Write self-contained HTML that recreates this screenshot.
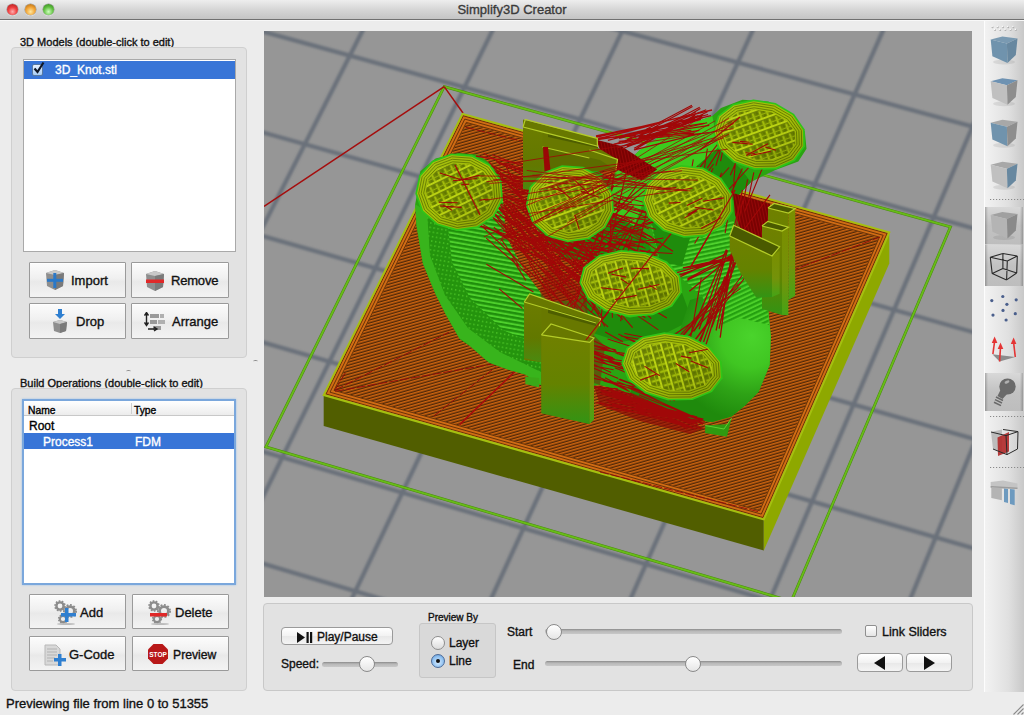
<!DOCTYPE html><html><head><meta charset="utf-8"><style>
*{margin:0;padding:0;box-sizing:border-box}
html,body{width:1024px;height:715px;overflow:hidden;background:#ececec;font-family:"Liberation Sans",sans-serif;color:#000;position:relative}
.glabel,.seltext,.row,.bt,#status,.lbl,.hdr span,#title{-webkit-text-stroke:0.35px currentColor}
#titlebar{position:absolute;left:0;top:0;width:1024px;height:20px;background:linear-gradient(#eeeeee,#d6d6d6 50%,#c4c4c4);border-bottom:1px solid #707070}
#titlebar:after{content:"";position:absolute;left:0;top:20px;width:1024px;height:1px;background:#f8f8f8}
.tl{position:absolute;top:4px;width:11px;height:11px;border-radius:50%;box-shadow:0 0 0 0.5px rgba(0,0,0,0.35), 0 1px 1px rgba(255,255,255,0.6)}
#title{position:absolute;left:0;width:1024px;top:2px;text-align:center;font-size:13px;color:#3a3a3a;padding-left:0px}
.glabel{position:absolute;font-size:11px;color:#111;white-space:nowrap}
.group{position:absolute;background:#e2e2e2;border:1px solid #cfcfcf;border-radius:4px}
.list{position:absolute;background:#fff;border:1px solid #a9a9a9}
.list.focus{border:2px solid #7aa7dc;box-shadow:0 0 2px #9cc0e8}
.sel{position:absolute;left:0;right:0;background:#3875d7}
.seltext{position:absolute;color:#fff;font-size:12px;white-space:nowrap}
.chk{position:absolute;left:8px;top:4px;width:11px;height:12px;border-radius:2px;background:linear-gradient(#e8f2ff,#a8cdf5);border:1px solid #5a7aa0}
.hdr{position:absolute;left:0;top:0;right:0;height:15px;background:linear-gradient(#ffffff,#ececec);border-bottom:1px solid #c8c8c8;font-size:10px}
.hdr span{position:absolute;top:2px}
.hsep{position:absolute;left:107px;top:2px;width:1px;height:11px;background:#cfcfcf}
.row{position:absolute;font-size:12px;color:#000}
.btn{position:absolute;background:linear-gradient(#fcfcfc,#f0f0f0 45%,#e9e9e9 55%,#f3f3f3);border:1px solid #9a9a9a;border-radius:1px;box-shadow:inset 0 1px 0 #fff}
.btn .ico{position:absolute}
.bt{position:absolute;top:10px;font-size:13px;color:#111;white-space:nowrap}
.split{position:absolute;width:5px;height:3px;border-top:1.5px solid #888;border-radius:50% 50% 0 0}
#status{position:absolute;left:6px;top:696px;font-size:13px;color:#111;white-space:nowrap}
#viewport{position:absolute;left:264px;top:31px;width:708px;height:566px;overflow:hidden;background:#959595}
.pbtn{position:absolute;background:linear-gradient(#ffffff,#f2f2f2 50%,#e8e8e8 51%,#f4f4f4);border:1px solid #9a9a9a;border-radius:4px}
.lbl{position:absolute;font-size:12px;color:#111;white-space:nowrap}
.groove{position:absolute;height:5px;border-radius:3px;background:linear-gradient(#8a8a8a,#b8b8b8 40%,#c8c8c8);}
.knob{position:absolute;width:16px;height:16px;border-radius:50%;background:linear-gradient(#ffffff,#e6e6e6);border:1px solid #8a8a8a}
.inner{position:absolute;background:#d9d9d9;border:1px solid #c6c6c6;border-radius:3px}
.radio{position:absolute;width:14px;height:14px;border-radius:50%;background:linear-gradient(#ffffff,#dcdcdc);border:1px solid #8d8d8d}
.radio.on{background:radial-gradient(circle at 50% 60%,#d8ecff 0,#8ec0f0 60%,#5a90d0 100%);border-color:#4a6a98}
.dot{position:absolute;left:4px;top:4px;width:4px;height:4px;border-radius:50%;background:#111}
.cbox{position:absolute;width:12px;height:12px;border-radius:2px;background:linear-gradient(#ffffff,#e4e4e4);border:1px solid #8f8f8f}
#toolbar{position:absolute;left:984px;top:21px;width:40px;height:671px;background:linear-gradient(90deg,#f2f2f2,#e0e0e0 60%,#c8c8c8);border-left:1px solid #fdfdfd}
</style></head><body>
<div id="titlebar">
  <div class="tl" style="left:7px;background:radial-gradient(circle at 50% 70%,#ffb0b0 0,#f04040 45%,#a01818 100%)"></div>
  <div class="tl" style="left:25.3px;background:radial-gradient(circle at 50% 70%,#ffe8a0 0,#f0a030 50%,#a06010 100%)"></div>
  <div class="tl" style="left:43.4px;background:radial-gradient(circle at 50% 70%,#d0ffc0 0,#60c040 50%,#2c7a18 100%)"></div>
  <div id="title">Simplify3D Creator</div>
</div>

<div class="glabel" style="left:20px;top:36px">3D Models (double-click to edit)</div>
<div class="group" style="left:11px;top:47px;width:236px;height:311px"></div>
<div class="list" style="left:23px;top:59px;width:213px;height:193px">
  <div class="sel" style="top:1px;height:18px"></div>
  <div class="chk"><svg width="13" height="13" viewBox="0 0 13 13" style="position:absolute;left:-1px;top:-3px;overflow:visible"><path d="M2.5 6.5 L5.5 10 L11.5 0.5" stroke="#101828" stroke-width="2.2" fill="none"/></svg></div>
  <div class="seltext" style="left:31px;top:3px">3D_Knot.stl</div>
</div>

<div class="btn" style="left:29px;top:262px;width:97px;height:36px"><span class="ico" style="left:14px;top:6px">
 <svg width="22" height="22" viewBox="0 0 22 22"><path d="M2 4 L11 1 L20 4 L19 17 L11 21 L3 17Z" fill="#8e8e8e"/><path d="M2 4 L11 1 L20 4 L11 6Z" fill="#c8c8c8"/><path d="M11 6 L20 4 L19 17 L11 21Z" fill="#7a7a7a"/><rect x="9.3" y="4" width="3" height="15" fill="#2a78c8"/><rect x="3" y="9.8" width="16" height="3" fill="#2a78c8"/></svg></span><span class="bt" style="left:41px;top:10px">Import</span></div>
<div class="btn" style="left:131px;top:262px;width:98px;height:36px"><span class="ico" style="left:12px;top:7px">
 <svg width="22" height="22" viewBox="0 0 22 22"><path d="M2 4 L11 1 L20 4 L19 17 L11 21 L3 17Z" fill="#8e8e8e"/><path d="M2 4 L11 1 L20 4 L11 6Z" fill="#c8c8c8"/><path d="M11 6 L20 4 L19 17 L11 21Z" fill="#7a7a7a"/><rect x="2" y="9.5" width="18" height="3.5" fill="#e02828"/></svg></span><span class="bt" style="left:39px;top:10px;letter-spacing:-0.2px">Remove</span></div>
<div class="btn" style="left:29px;top:303px;width:97px;height:36px"><span class="ico" style="left:22px;top:5px">
 <svg width="16" height="24" viewBox="0 0 16 24"><path d="M1 13 L8 11 L15 13 L14 22 L8 24 L2 22Z" fill="#8e8e8e"/><path d="M1 13 L8 11 L15 13 L8 15Z" fill="#c8c8c8"/><path d="M8 15 L15 13 L14 22 L8 24Z" fill="#7a7a7a"/><rect x="6" y="0" width="4" height="6" fill="#2f7fd0"/><path d="M3 5 L13 5 L8 10Z" fill="#2f7fd0"/></svg></span><span class="bt" style="left:46px;top:10px">Drop</span></div>
<div class="btn" style="left:131px;top:303px;width:98px;height:36px"><span class="ico" style="left:12px;top:8px">
 <svg width="22" height="20" viewBox="0 0 22 20"><rect x="6" y="2" width="9" height="4" fill="#9a9a9a"/><rect x="16" y="2" width="4" height="4" fill="#b0b0b0"/><rect x="6" y="8" width="7" height="4" fill="#9a9a9a"/><rect x="14" y="8" width="7" height="4" fill="#b0b0b0"/><rect x="9" y="14" width="8" height="4" fill="#9a9a9a"/><path d="M2.5 1 L2.5 13 M0.5 3.5 L2.5 0.5 L4.5 3.5 M0.5 10.5 L2.5 13.5 L4.5 10.5 M4 17 L13 17 M10 15 L13 17 L10 19" stroke="#222" stroke-width="1.4" fill="none"/></svg></span><span class="bt" style="left:40px;top:10px">Arrange</span></div>

<div class="split" style="left:126px;top:370px"></div>
<div class="split" style="left:253px;top:360px"></div>

<div class="glabel" style="left:20px;top:377px">Build Operations (double-click to edit)</div>
<div class="group" style="left:11px;top:388px;width:236px;height:303px"></div>
<div class="list focus" style="left:22px;top:399px;width:214px;height:186px">
  <div class="hdr"><span style="left:4px;top:4px;font-size:10.3px">Name</span><div class="hsep"></div><span style="left:110px;top:4px;font-size:10.3px">Type</span></div>
  <div class="row" style="top:18px;left:5px">Root</div>
  <div class="sel" style="top:32px;height:16px"></div>
  <div class="seltext" style="left:19px;top:34px">Process1</div>
  <div class="seltext" style="left:111px;top:34px">FDM</div>
</div>

<div class="btn" style="left:29px;top:594px;width:97px;height:35px"><span class="ico" style="left:24px;top:5px">
 <svg width="24" height="26" viewBox="0 0 24 26"><g fill="none" stroke="#8c8c8c"><circle cx="6" cy="6" r="3.6" stroke-width="2.4"/><circle cx="6" cy="6" r="5" stroke-width="1.6" stroke-dasharray="1.6,1.5"/><circle cx="16" cy="11" r="4.4" stroke-width="2.8"/><circle cx="16" cy="11" r="6.1" stroke-width="1.8" stroke-dasharray="1.8,1.7"/><circle cx="9" cy="19" r="3.2" stroke-width="2.2"/><circle cx="9" cy="19" r="4.4" stroke-width="1.4" stroke-dasharray="1.4,1.4"/></g><rect x="7" y="13" width="15" height="3.5" fill="#2f7fd0"/><rect x="11" y="8" width="3.5" height="14" fill="#2f7fd0"/><ellipse cx="12" cy="24" rx="9" ry="1" fill="#bbb"/></svg></span><span class="bt" style="left:50px">Add</span></div>
<div class="btn" style="left:132px;top:594px;width:97px;height:35px"><span class="ico" style="left:15px;top:5px">
 <svg width="24" height="26" viewBox="0 0 24 26"><g fill="none" stroke="#8c8c8c"><circle cx="6" cy="6" r="3.6" stroke-width="2.4"/><circle cx="6" cy="6" r="5" stroke-width="1.6" stroke-dasharray="1.6,1.5"/><circle cx="16" cy="11" r="4.4" stroke-width="2.8"/><circle cx="16" cy="11" r="6.1" stroke-width="1.8" stroke-dasharray="1.8,1.7"/><circle cx="9" cy="19" r="3.2" stroke-width="2.2"/><circle cx="9" cy="19" r="4.4" stroke-width="1.4" stroke-dasharray="1.4,1.4"/></g><rect x="2" y="13" width="17" height="3.5" fill="#e02828"/><ellipse cx="12" cy="24" rx="9" ry="1" fill="#bbb"/></svg></span><span class="bt" style="left:42px">Delete</span></div>
<div class="btn" style="left:29px;top:636px;width:97px;height:35px"><span class="ico" style="left:13px;top:6px">
 <svg width="24" height="24" viewBox="0 0 24 24"><path d="M2 2 L13 2 L17 6 L17 22 L2 22Z" fill="#d8d8d8" stroke="#b8b8b8" stroke-width="1"/><g stroke="#aaa" stroke-width="0.8"><path d="M4 6H14M4 9H14M4 12H14M4 15H12M4 18H10"/></g><rect x="15" y="11" width="3.5" height="12" fill="#2f7fd0"/><rect x="11" y="15" width="12" height="3.5" fill="#2f7fd0"/></svg></span><span class="bt" style="left:39px">G-Code</span></div>
<div class="btn" style="left:132px;top:636px;width:97px;height:35px"><span class="ico" style="left:14px;top:6px">
 <svg width="22" height="22" viewBox="0 0 22 22"><path d="M6.5 1 L15.5 1 L21 6.5 L21 15.5 L15.5 21 L6.5 21 L1 15.5 L1 6.5Z" fill="#b81818"/><text x="11" y="13.5" font-family="Liberation Sans" font-size="6.5" font-weight="bold" fill="#fff" text-anchor="middle">STOP</text></svg></span><span class="bt" style="left:40px;font-size:12.2px;top:11px">Preview</span></div>

<div id="status">Previewing file from line 0 to 51355</div>

<div id="viewport"><svg width="708" height="566" viewBox="0 0 708 566" style="position:absolute;left:0;top:0"><defs><filter id="blur" x="-5%" y="-5%" width="110%" height="110%"><feGaussianBlur stdDeviation="1.25"/></filter><pattern id="stripes" patternUnits="userSpaceOnUse" width="3" height="2.9" patternTransform="rotate(-16)"><rect width="3" height="2.9" fill="#cc6410"/><rect y="1.55" width="3" height="1.35" fill="#502808"/></pattern>
<linearGradient id="tabl" x1="0" y1="0" x2="0" y2="1"><stop offset="0" stop-color="#6c7c00"/><stop offset="0.6" stop-color="#627800"/><stop offset="1" stop-color="#4a8a10"/></linearGradient>
<linearGradient id="rimshade" x1="0" y1="0" x2="1" y2="1"><stop offset="0" stop-color="#fff" stop-opacity="0.06"/><stop offset="0.5" stop-color="#000" stop-opacity="0"/><stop offset="1" stop-color="#000" stop-opacity="0.18"/></linearGradient>
<pattern id="layers" patternUnits="userSpaceOnUse" width="6" height="4.4" patternTransform="rotate(10)"><rect width="6" height="4.4" fill="#1f8e0c"/><rect y="2.4" width="6" height="2" fill="#4ed02c"/></pattern>
<pattern id="layers2" patternUnits="userSpaceOnUse" width="6" height="4.2" patternTransform="rotate(-12)"><rect width="6" height="4.2" fill="#229a0e"/><rect y="2.2" width="6" height="2" fill="#50d22e"/></pattern>
<pattern id="layers3" patternUnits="userSpaceOnUse" width="6" height="4.2" patternTransform="rotate(-25)"><rect width="6" height="4.2" fill="#24a010"/><rect y="2.2" width="6" height="2" fill="#4cd02a"/></pattern>
<pattern id="dots" patternUnits="userSpaceOnUse" width="4" height="4.4" patternTransform="rotate(10)"><rect width="4" height="4.4" fill="#24940d"/><rect x="1" y="1" width="1.4" height="1.4" fill="#4cc626"/></pattern>
<pattern id="waffle" patternUnits="userSpaceOnUse" width="7" height="10.5" patternTransform="rotate(-20)"><rect width="7" height="10.5" fill="#8aa204"/><rect x="0" y="3.2" width="2.8" height="7.3" fill="#627800"/><rect x="4.6" y="3.2" width="2.4" height="7.3" fill="#6e8400"/><rect width="7" height="2.3" fill="#bcd412"/><rect x="0" y="2.3" width="7" height="0.9" fill="#506400"/><rect x="2.8" y="3.2" width="1.8" height="7.3" fill="#aac40a"/><rect x="0" y="6.5" width="7" height="1.2" fill="#9ab408"/></pattern>
<pattern id="waffle2" patternUnits="userSpaceOnUse" width="7" height="10.5" patternTransform="rotate(-26)"><rect width="7" height="10.5" fill="#8aa204"/><rect x="0" y="3.2" width="2.8" height="7.3" fill="#627800"/><rect x="4.6" y="3.2" width="2.4" height="7.3" fill="#6e8400"/><rect width="7" height="2.3" fill="#bcd412"/><rect x="0" y="2.3" width="7" height="0.9" fill="#506400"/><rect x="2.8" y="3.2" width="1.8" height="7.3" fill="#aac40a"/><rect x="0" y="6.5" width="7" height="1.2" fill="#9ab408"/></pattern><pattern id="waffle3" patternUnits="userSpaceOnUse" width="7" height="10.5" patternTransform="rotate(-106)"><rect width="7" height="10.5" fill="#8aa204"/><rect x="0" y="3.2" width="2.8" height="7.3" fill="#627800"/><rect x="4.6" y="3.2" width="2.4" height="7.3" fill="#6e8400"/><rect width="7" height="2.3" fill="#bcd412"/><rect x="0" y="2.3" width="7" height="0.9" fill="#506400"/><rect x="2.8" y="3.2" width="1.8" height="7.3" fill="#aac40a"/><rect x="0" y="6.5" width="7" height="1.2" fill="#9ab408"/></pattern>
<pattern id="redwall" patternUnits="userSpaceOnUse" width="3" height="10" patternTransform="rotate(-12)"><rect width="3" height="10" fill="#7a0202"/><rect width="1" height="10" fill="#940808"/></pattern>
<linearGradient id="tabg" x1="0" y1="0" x2="0" y2="1"><stop offset="0" stop-color="#708000"/><stop offset="0.55" stop-color="#648200"/><stop offset="1" stop-color="#329414"/></linearGradient>
<linearGradient id="tabr" x1="0" y1="0" x2="0" y2="1"><stop offset="0" stop-color="#7a8e00"/><stop offset="0.6" stop-color="#74920a"/><stop offset="1" stop-color="#44a416"/></linearGradient>
<radialGradient id="frad" gradientUnits="userSpaceOnUse" cx="482" cy="316" r="95" fx="488" fy="305"><stop offset="0" stop-color="#4ad42c"/><stop offset="0.3" stop-color="#40c622"/><stop offset="0.55" stop-color="#2ea216"/><stop offset="0.8" stop-color="#1f8a0c"/></radialGradient><linearGradient id="fgrad" x1="0" y1="0" x2="0" y2="1"><stop offset="0" stop-color="#3fcc20"/><stop offset="0.45" stop-color="#38c01c"/><stop offset="0.7" stop-color="#2aa012"/><stop offset="1" stop-color="#228e0c"/></linearGradient>
</defs><rect width="708" height="566" fill="#969696"/><g stroke="#6a717a" stroke-width="4.3" filter="url(#blur)"><line x1="-200.9" y1="-589.6" x2="-1011.9" y2="789.6"/><line x1="-96.6" y1="-563.0" x2="-892.6" y2="828.1"/><line x1="8.5" y1="-536.2" x2="-772.1" y2="867.0"/><line x1="114.5" y1="-509.2" x2="-650.3" y2="906.3"/><line x1="221.5" y1="-482.0" x2="-527.3" y2="946.0"/><line x1="329.4" y1="-454.5" x2="-402.9" y2="986.1"/><line x1="438.3" y1="-426.7" x2="-277.3" y2="1026.7"/><line x1="548.1" y1="-398.7" x2="-150.3" y2="1067.6"/><line x1="658.9" y1="-370.5" x2="-22.0" y2="1109.0"/><line x1="770.7" y1="-342.0" x2="107.6" y2="1150.9"/><line x1="883.5" y1="-313.3" x2="238.7" y2="1193.2"/><line x1="997.3" y1="-284.3" x2="371.2" y2="1235.9"/><line x1="1112.1" y1="-255.0" x2="505.1" y2="1279.1"/><line x1="1228.0" y1="-225.5" x2="640.4" y2="1322.8"/><line x1="-301.9" y1="-545.9" x2="1635.2" y2="-46.8"/><line x1="-347.5" y1="-469.7" x2="1607.0" y2="41.1"/><line x1="-394.1" y1="-391.9" x2="1578.2" y2="130.9"/><line x1="-441.6" y1="-312.5" x2="1548.8" y2="222.8"/><line x1="-490.1" y1="-231.4" x2="1518.7" y2="316.7"/><line x1="-539.6" y1="-148.6" x2="1487.9" y2="412.8"/><line x1="-590.1" y1="-64.1" x2="1456.4" y2="511.1"/><line x1="-641.8" y1="22.3" x2="1424.1" y2="611.7"/><line x1="-694.5" y1="110.5" x2="1391.1" y2="714.7"/><line x1="-748.4" y1="200.7" x2="1357.4" y2="820.1"/><line x1="-803.6" y1="292.8" x2="1322.7" y2="928.1"/><line x1="-859.9" y1="387.1" x2="1287.3" y2="1038.7"/><line x1="-917.6" y1="483.4" x2="1250.9" y2="1152.1"/></g><polygon points="180.2,55.6 686.5,195.9 527.2,570.3 1.9,415.9" fill="none" stroke="#4a8a10" stroke-width="2.8"/><polygon points="180.2,55.6 686.5,195.9 527.2,570.3 1.9,415.9" fill="none" stroke="#68bc18" stroke-width="1.8"/><g stroke="#a50d0d" stroke-width="1.5"><line x1="180.2" y1="55.599999999999994" x2="0" y2="175.4"/><line x1="180.2" y1="55.599999999999994" x2="199" y2="82"/></g><polygon points="59.7,364.0 499.8,488.4 499.8,519.4 59.7,395.0" fill="#515e00"/><polygon points="499.8,488.4 625.3,201.4 625.3,232.4 499.8,519.4" fill="#8ea800"/><polygon points="198.5,82.9 625.3,201.4 499.8,488.4 59.7,364.0" fill="url(#stripes)"/><polygon points="200.5,87.4 620.1,203.9 497.6,483.8 65.1,361.6" fill="none" stroke="#d06c14" stroke-width="7.6"/><polygon points="199.3,84.8 623.1,202.4 498.9,486.5 62.0,363.0" fill="none" stroke="#5c2c08" stroke-width="0.9"/><polygon points="200.8,88.1 619.2,204.3 497.3,483.1 66.0,361.2" fill="none" stroke="#5c2c08" stroke-width="0.9"/><polygon points="202.3,91.4 615.4,206.1 495.7,479.8 70.0,359.4" fill="none" stroke="#5c2c08" stroke-width="0.9"/><polygon points="198.5,82.9 625.3,201.4 499.8,488.4 59.7,364.0" fill="none" stroke="#a4c010" stroke-width="2"/><path d="M201.6 96.2L257.9 110.2M516.0 244.0L616.0 206.0M336.0 441.0L495.0 480.8M71.0 359.2L184.9 301.2M71.0 360.3L232.2 332.4M169.9 385.0L232.2 335.6M71.0 359.0L81.8 341.0" stroke="#920a0a" stroke-width="1" stroke-dasharray="9,2" opacity="0.9"/><path d="M195.60000000000002 393.6L251.5 339.9" stroke="#a80c0c" stroke-width="1.5"/><polygon points="151.2,173.3 153.8,159.0 156.3,140.3 171.6,127.6 194.4,122.0 214.7,123.8 232.5,137.7 239.6,153.0 258.0,169.0 261.7,178.3 265.5,160.6 280.7,142.8 303.6,133.9 329.0,135.2 346.8,150.4 351.0,142.0 376.0,119.0 401.0,102.0 448.4,85.0 457.0,77.0 478.5,68.8 504.2,70.5 527.9,83.4 540.8,100.6 542.5,117.8 534.3,130.6 510.7,139.2 487.0,151.0 469.9,169.0 476.0,199.0 492.3,249.0 503.5,271.4 506.8,305.0 505.7,334.0 494.5,361.0 481.0,374.4 467.6,385.6 448.3,390.9 408.5,386.2 385.0,379.2 366.3,362.8 336.0,354.0 296.0,359.0 277.0,354.0 261.3,343.5 246.2,339.2 224.9,331.5 206.0,315.0 195.6,307.7 181.7,283.3 171.5,263.0 158.9,232.5 152.5,194.4" fill="#2aa412" /><polygon points="151.2,173.3 164.0,181.0 166.0,224.0 181.0,264.0 204.0,297.0 236.0,321.0 277.0,339.0 277.0,354.0 261.3,343.5 246.2,339.2 224.9,331.5 206.0,315.0 195.6,307.7 181.7,283.3 171.5,263.0 158.9,232.5 152.5,194.4" fill="#38b41c" /><polygon points="195.6,307.7 206.0,315.0 206.4,315.0 196.7,308.0" fill="#2a9a10" /><polygon points="163.0,181.0 184.0,195.0 188.0,231.0 206.0,267.0 239.0,299.0 277.0,315.0 277.0,341.0 236.0,321.0 204.0,297.0 181.0,264.0 166.0,224.0" fill="url(#dots)" /><polygon points="184.0,195.0 239.0,167.0 256.0,209.0 281.0,261.0 277.0,315.0 239.0,299.0 206.0,267.0 188.0,231.0" fill="url(#layers)" /><polygon points="237.0,147.0 258.0,147.0 271.0,181.0 296.0,217.0 324.0,231.0 314.0,269.0 284.0,271.0 261.0,241.0 242.0,205.0" fill="url(#stripes)" /><polygon points="237.0,147.0 258.0,147.0 271.0,181.0 296.0,217.0 324.0,231.0 314.0,269.0 284.0,271.0 261.0,241.0 242.0,205.0" fill="#900804" opacity="0.12"/><polygon points="272.0,197.0 311.0,213.0 348.0,181.0 376.0,194.0 388.0,221.0 336.0,231.0 298.0,227.0" fill="#1f8c0c" /><polygon points="346.0,150.0 376.0,119.0 398.0,134.0 384.0,159.0 370.0,195.0 349.0,183.0" fill="#3cc81e" /><polygon points="351.0,142.0 376.0,119.0 401.0,102.0 448.4,85.0 454.0,117.0 426.0,141.0 386.0,159.0" fill="#3ccc1e" /><polygon points="426.0,141.0 454.0,117.0 476.0,137.0 487.0,151.0 469.9,169.0 451.0,171.0" fill="#1f8c0c" /><polygon points="384.0,181.0 408.0,201.0 438.0,207.0 469.0,189.0 492.0,249.0 476.0,269.0 441.0,269.0 426.0,254.0 396.0,231.0" fill="url(#layers2)" /><polygon points="386.0,184.0 408.0,201.0 426.0,207.0 418.0,235.0 396.0,231.0" fill="#1f8c0c" /><polygon points="318.0,264.0 336.0,279.0 366.0,287.0 401.0,277.0 417.0,259.0 428.0,289.0 396.0,305.0 356.0,311.0 326.0,301.0" fill="#1f8c0c" /><polygon points="426.0,269.0 492.3,249.0 503.5,271.4 506.8,305.0 505.7,334.0 494.5,361.0 481.0,374.4 467.6,385.6 448.3,390.9 408.5,386.2 385.0,379.2 366.3,362.8 376.0,319.0 416.0,299.0" fill="url(#frad)" /><polygon points="436.0,251.0 492.3,249.0 503.5,271.4 505.0,294.0 476.0,287.0 458.0,294.0 441.0,279.0" fill="url(#layers3)" /><polygon points="332.2,108.7 357.2,115.0 393.2,138.4 377.6,149.3 341.6,133.7" fill="url(#redwall)" /><polygon points="469.0,162.0 506.0,173.0 506.0,214.0 481.0,209.0 471.0,184.0" fill="url(#redwall)" /><polygon points="286.0,231.0 321.0,259.0 326.0,301.0 341.0,315.0 336.0,354.0 296.0,341.0 281.0,289.0 276.0,259.0" fill="#8e0606" opacity="0.45"/><polygon points="330.0,355.0 366.0,362.0 396.0,381.0 441.0,397.0 426.0,403.0 376.0,390.0 336.0,374.0" fill="#8e0606" opacity="0.65"/><path d="M256.5 193.0L299.1 243.7M273.7 210.0L291.7 233.1M284.3 236.8L302.5 253.5M222.4 233.2L269.5 261.0M310.0 242.9L338.8 287.0M232.0 143.6L271.7 167.8M247.8 173.6L261.7 190.0M264.6 231.4L288.9 270.4M265.9 216.0L298.1 244.4M310.8 241.4L340.8 295.6M251.1 171.3L280.4 189.5M283.9 177.5L326.9 222.6M314.4 245.2L330.2 257.6M294.5 182.9L341.7 233.2M222.2 207.1L266.7 245.7M230.4 161.8L260.9 222.7M237.7 175.8L259.1 188.9M292.5 156.3L323.8 192.6M247.8 226.9L261.8 249.4M236.7 192.3L259.8 212.4M317.2 229.9L329.7 262.8M240.0 172.7L273.1 226.0M235.2 257.8L258.5 277.7M291.2 182.6L320.8 201.1M237.0 207.7L254.9 234.4M249.2 179.8L292.2 232.5M276.7 245.1L300.4 262.2M305.0 238.2L330.8 257.9" stroke="#a00808" stroke-width="1.1" opacity="1" fill="none"/><path d="M229.7 175.0L362.6 239.0M206.5 155.2L323.4 285.7M240.5 171.1L351.8 275.3M213.3 159.8L312.2 292.4M208.9 186.3L303.5 277.1M222.8 157.3L380.2 230.3M209.0 193.1L346.9 235.4M255.4 195.3L307.3 258.6M212.8 150.9L358.1 240.4M240.8 132.6L313.1 286.1M226.0 158.3L355.6 262.4M225.2 131.1L368.6 296.7M254.8 175.5L331.6 254.4M240.5 176.2L307.4 245.4M224.2 164.8L377.0 264.0M207.4 186.6L339.0 265.3M217.1 158.9L334.8 283.0M211.1 167.5L313.8 277.7M207.8 148.4L330.4 273.6M208.6 161.1L316.9 248.7M229.8 196.1L344.1 295.9M214.4 193.7L332.4 242.2M243.4 192.8L296.7 247.8M244.5 152.9L320.2 229.6M208.0 172.3L394.4 298.9" stroke="#a00808" stroke-width="1.1" opacity="1" fill="none"/><path d="M322.7 340.3L365.6 360.5M326.3 313.8L351.7 318.7M357.1 305.0L397.7 312.6M321.4 322.4L371.8 340.4M315.4 314.1L338.7 325.3M358.2 349.2L407.1 369.7M378.8 352.1L406.1 365.0M339.6 349.9L380.6 361.3M335.4 328.9L367.6 333.6M355.7 347.9L411.0 369.8M353.0 350.5L376.6 359.7M343.7 308.0L370.4 316.5M322.4 327.8L365.1 339.1M320.7 333.0L349.6 338.7M328.9 322.4L350.3 330.5M371.1 317.1L414.5 339.3M305.3 298.6L352.7 320.6M354.3 303.1L387.2 318.9M375.3 353.2L400.7 365.2M341.0 346.8L363.5 358.7M354.9 348.4L381.6 358.0M350.8 336.8L382.6 349.9M337.5 316.3L362.3 326.0M323.2 311.9L344.5 319.9M354.6 336.8L375.3 342.7M341.2 301.1L358.8 310.8M320.0 316.5L349.0 326.7M315.7 327.0L347.1 341.5M308.8 314.8L344.0 333.4M339.3 329.5L385.0 339.6M302.2 325.7L354.3 347.5M317.7 344.9L370.5 355.8M352.6 322.5L381.7 328.8M329.9 322.6L350.7 328.1M310.2 353.6L354.0 358.1M361.6 307.1L398.8 319.5M330.8 317.8L367.8 323.6M360.4 302.5L412.5 312.3M336.7 326.5L357.8 329.7M327.1 319.0L375.5 345.2" stroke="#a00808" stroke-width="1.1" opacity="1" fill="none"/><path d="M335.8 371.6L432.3 398.1M343.2 360.4L434.4 393.9M344.6 371.1L425.9 395.7M336.3 359.6L438.5 389.4M342.7 374.1L431.8 386.2M355.8 370.6L420.1 393.8M336.5 362.4L418.1 387.1M375.0 364.1L440.8 390.6M358.3 375.8L433.2 385.7M357.5 369.8L420.5 385.4M370.4 366.8L420.8 390.8M340.8 374.0L428.5 385.5M367.8 356.2L423.0 384.4M364.3 356.8L429.1 385.4M352.6 371.1L429.4 390.8M352.8 364.9L430.9 385.4M352.4 359.9L437.6 398.1M334.0 357.6L433.6 392.6M331.9 371.6L439.6 390.3M346.6 368.2L439.5 388.0M344.6 358.7L431.7 391.0M342.5 363.7L416.9 388.7M375.2 368.7L423.1 398.0M347.1 360.3L416.9 386.2M340.0 359.8L437.8 388.0M342.2 369.1L438.9 388.4M365.3 363.2L430.0 392.9M373.4 372.9L428.7 396.6M347.5 363.6L440.0 392.2M365.8 361.9L438.9 393.2M342.1 377.3L427.7 389.1M342.8 356.6L421.0 394.4M337.3 360.5L427.2 392.2M348.1 373.6L422.4 389.5M350.1 357.2L421.6 386.2" stroke="#a00808" stroke-width="1.1" opacity="1" fill="none"/><path d="M374.5 105.2L442.2 78.7M375.4 105.2L445.3 94.4M370.0 119.0L431.3 84.1M363.7 108.9L431.8 80.9M370.0 117.2L443.5 80.7M372.8 112.2L431.1 87.7M351.6 106.1L438.4 84.8M357.9 118.0L440.2 86.2M370.3 118.9L436.8 102.4M334.8 107.0L429.8 102.1M363.0 115.1L432.3 88.8M371.3 106.4L428.6 75.4M353.7 116.8L438.2 86.0M355.1 107.5L446.9 84.6M343.9 109.4L444.1 83.5M372.0 109.7L435.7 76.2M372.1 116.1L436.4 77.5M354.7 110.3L444.5 101.8M365.1 109.0L426.9 100.8M373.7 107.2L437.0 88.4M375.0 105.6L427.4 99.3M357.9 111.5L443.1 91.8M363.1 108.6L427.9 74.3M348.0 114.1L434.4 84.4M360.0 114.9L439.1 83.4" stroke="#a00808" stroke-width="1.1" opacity="1" fill="none"/><path d="M445.0 173.1L457.6 141.8M448.1 183.2L461.2 160.0M424.2 158.0L429.3 128.3M461.0 162.5L495.1 125.2M430.6 212.5L456.9 168.4M422.0 176.3L433.8 134.8M433.9 154.6L449.5 133.0M435.6 169.2L465.1 136.5M428.6 145.9L464.4 99.2M479.0 173.4L483.6 148.3M442.5 163.5L452.1 148.3M466.3 144.3L487.6 95.8M480.7 180.5L499.9 133.5M467.5 166.8L470.3 151.0M435.4 165.7L449.1 137.3M466.1 164.4L478.3 137.6M479.4 199.4L506.0 163.8M440.5 136.6L443.4 117.6M422.4 196.9L430.9 141.2M469.7 218.6L478.5 169.9M469.8 150.9L471.6 128.0M461.1 202.2L464.5 182.8M443.3 137.1L463.1 107.1M456.6 130.1L460.0 114.1M470.0 211.6L475.4 174.4M439.6 162.1L442.6 142.5M448.2 196.2L464.5 176.3M484.8 165.9L489.8 141.3M466.9 211.3L478.5 158.8M451.9 134.6L459.8 107.0" stroke="#a00808" stroke-width="1.1" opacity="1" fill="none"/><path d="M462.1 255.1L434.4 311.2M474.3 253.1L422.5 306.8M437.3 246.7L425.9 310.3M461.1 245.3L429.9 327.6M456.1 259.0L398.5 324.3M479.8 242.0L424.2 318.0M483.8 243.2L417.6 326.1M467.9 245.2L399.3 327.5M459.7 258.9L401.7 324.3M476.7 257.4L396.7 313.3" stroke="#a00808" stroke-width="1.1" opacity="1" fill="none"/><path d="M236.7 174.6L357.4 262.1M244.3 174.6L344.5 268.4M244.8 206.0L379.0 215.6M268.1 191.4L359.0 288.7M241.6 170.0L401.2 238.3M247.9 185.5L355.2 285.2M248.6 179.8L372.8 250.5M293.2 210.9L354.4 221.3M286.2 218.4L328.4 266.5M288.1 201.6L343.5 271.7M279.8 178.7L377.3 222.6M238.5 185.8L352.7 237.7M274.8 210.8L402.9 287.0M295.6 208.5L350.5 219.0M273.4 196.3L380.0 211.9M247.6 215.1L374.1 263.1M241.7 189.0L398.8 259.2M295.5 178.8L362.4 272.0M262.7 208.4L370.9 214.0M241.9 218.1L335.5 220.5M256.1 204.7L394.3 244.4M265.9 208.4L348.2 235.7M272.8 200.8L329.0 213.5M244.3 205.3L381.4 286.7M282.1 181.7L387.2 287.7M256.9 169.6L356.0 228.0M246.6 171.3L336.0 277.5M239.0 199.7L342.5 220.4" stroke="#a00808" stroke-width="1.1" opacity="1" fill="none"/><path d="M349.5 154.0L305.3 291.5M368.3 189.4L289.0 262.2M383.9 175.6L356.6 290.1M362.7 139.1L341.4 233.5M346.4 190.1L348.4 286.7M388.9 153.1L287.5 233.1M390.0 146.8L293.8 225.5M348.2 141.7L309.2 236.2M359.9 204.0L294.4 285.1M379.2 178.8L327.1 281.8M372.4 155.1L307.4 242.3M364.0 208.1L315.1 229.2M367.5 195.9L316.6 276.7M350.1 143.4L333.9 227.6M359.6 165.9L296.5 226.7M346.3 205.6L336.1 295.4M368.1 205.8L350.0 270.4M369.6 174.6L299.0 252.2" stroke="#a00808" stroke-width="1.1" opacity="1" fill="none"/><path d="M468.3 224.7L452.1 299.5M469.7 229.1L455.1 297.7M469.7 224.5L442.1 313.3M467.5 221.6L456.2 306.7M463.4 219.3L441.9 295.1M468.9 226.5L439.6 310.9M474.7 223.4L447.8 296.3M459.0 230.7L435.1 298.3M474.1 226.7L429.9 300.4M462.4 218.6L426.2 304.5" stroke="#a00808" stroke-width="1.3" opacity="1" fill="none"/><path d="M421.2 236.5L472.2 228.6M423.5 247.9L472.5 221.5M418.9 236.9L473.7 225.0M415.2 244.2L474.9 222.7M425.4 260.2L477.3 217.4M412.1 241.8L466.3 226.6M423.4 249.2L472.7 224.6M411.5 248.2L462.9 222.3" stroke="#a00808" stroke-width="1.3" opacity="1" fill="none"/><path d="M237.2 148.3L386.6 213.9M251.3 137.2L392.9 190.2M228.2 123.7L366.7 176.7M227.0 149.5L382.6 206.6M219.5 122.1L351.3 196.6M249.6 159.0L392.0 198.4M241.5 133.6L354.8 179.3M237.4 149.4L370.4 188.6M233.0 131.4L384.9 198.1M245.9 159.6L352.9 174.9M227.3 164.4L383.5 189.3M247.1 136.1L387.9 173.5M245.6 168.0L361.2 192.1M221.2 132.8L350.0 183.8M218.7 134.0L342.3 195.2M232.3 130.4L392.6 184.5M237.3 163.7L381.5 217.3M240.4 162.5L339.9 205.7M229.4 135.0L382.2 206.1M229.7 137.2L352.7 215.7M240.6 132.0L367.9 171.9M226.8 144.1L394.4 211.9M237.9 157.2L351.1 203.7M255.8 126.7L392.0 218.3M230.7 159.7L395.3 176.4M234.6 148.7L383.6 182.3M246.1 154.2L387.5 205.7M250.4 149.2L368.6 192.1M232.3 142.1L365.6 188.6M221.8 138.9L392.7 184.3" stroke="#a00808" stroke-width="1" opacity="1" fill="none"/><path d="M350.3 209.0L387.6 226.5M336.5 222.4L369.8 232.5M369.2 227.8L393.4 223.9M358.7 213.7L399.4 207.0M373.4 187.5L413.2 181.5M329.5 217.0L345.5 211.7M346.5 196.1L364.5 186.0M377.8 192.8L395.8 182.7M372.1 196.8L409.0 220.3M352.0 205.8L379.5 197.8M356.1 222.5L387.2 232.4M370.1 220.2L408.5 222.5M319.5 202.5L364.2 199.4M360.1 201.5L393.6 189.8M375.5 219.1L390.8 222.1M332.1 231.3L351.2 222.2M381.9 212.0L397.2 211.3M365.7 196.5L405.8 186.3" stroke="#a00808" stroke-width="1.1" opacity="1" fill="none"/><path d="M332.0 106.3L448.0 79.0M333.8 108.7L440.0 92.3M349.4 113.4L435.4 99.3M212.0 125.0L396.0 155.5M332.0 105.0L381.0 95.0M334.0 108.0L396.0 92.0M322.0 309.0L426.0 179.0M291.0 286.0L386.0 219.0M471.0 159.0L426.0 237.0" stroke="#a80a0a" stroke-width="1.3" fill="none"/><polygon points="259.0,88.5 333.2,107.3 334.0,117.0 353.5,128.4 352.0,139.3 306.0,141.0 281.0,145.0 278.5,160.0 259.0,158.0" fill="#687800" /><polygon points="259.0,96.0 278.5,101.0 278.5,160.0 259.0,158.0" fill="url(#tabl)" /><polygon points="284.0,103.0 333.0,115.0 334.0,117.0 284.0,106.0" fill="#4e5e00" /><polygon points="278.5,116.0 336.0,129.0 352.0,139.3 306.0,141.0 281.0,145.0" fill="#5c6c00" /><polyline points="259.0,96.0 261.3,88.5 333.2,107.3 333.5,116.0" fill="none" stroke="#b4cc28" stroke-width="1.2" /><polyline points="259.0,96.0 284.8,102.6 333.0,115.0" fill="none" stroke="#b4cc28" stroke-width="1.2" /><polyline points="278.5,116.0 325.4,127.0" fill="none" stroke="#b4cc28" stroke-width="1.2" /><polyline points="325.4,119.0 353.5,128.4 352.0,139.3" fill="none" stroke="#b4cc28" stroke-width="1.2" /><polygon points="279.0,116.0 284.0,116.0 287.0,144.0 281.0,147.0" fill="#9a0606" /><polygon points="504.0,177.0 524.5,182.0 524.5,269.0 504.0,265.0" fill="url(#tabg)" /><polygon points="524.5,182.0 531.2,177.6 531.2,264.7 524.5,269.0" fill="url(#tabr)" /><polygon points="510.0,172.5 531.2,177.6 524.5,182.0 504.0,177.0" fill="#4a5a00" /><polyline points="504.0,177.0 510.0,172.5 531.2,177.6 524.5,182.0 504.0,177.0" fill="none" stroke="#b4cc28" stroke-width="1.2" /><polygon points="498.0,195.0 518.0,200.0 518.0,284.0 498.0,278.0" fill="url(#tabg)" /><polygon points="518.0,200.0 524.4,196.2 524.4,284.2 518.0,284.0" fill="url(#tabr)" /><polygon points="503.8,190.3 524.4,196.2 518.0,200.0 498.0,195.0" fill="#4a5a00" /><polyline points="498.0,195.0 503.8,190.3 524.4,196.2 518.0,200.0 498.0,195.0" fill="none" stroke="#b4cc28" stroke-width="1.2" /><polygon points="465.7,205.0 508.0,225.0 508.0,266.0 492.1,266.6 476.0,241.0 465.7,219.0" fill="url(#tabg)" /><polygon points="508.0,225.0 515.6,219.7 515.6,262.7 508.0,266.0" fill="url(#tabr)" /><polygon points="469.6,194.2 515.6,215.8 508.0,225.0 465.7,205.0" fill="#4a5a00" /><polyline points="465.7,205.0 469.6,194.2 515.6,215.8 508.0,225.0 465.7,205.0" fill="none" stroke="#b4cc28" stroke-width="1.2" /><polygon points="265.6,263.0 336.5,287.7 335.4,295.2 327.9,307.0 325.7,393.0 277.4,382.2 277.4,331.0 260.2,329.0 260.2,271.0" fill="#687800" /><polygon points="260.2,271.0 277.4,276.0 277.4,331.0 260.2,327.0" fill="url(#tabl)" /><polygon points="284.0,277.0 332.0,291.0 332.0,295.0 284.0,282.0" fill="#4e5e00" /><polygon points="277.4,303.8 325.7,311.3 325.7,393.0 277.4,382.2" fill="url(#tabg)" /><polygon points="325.7,311.3 330.0,307.0 330.0,388.6 325.7,393.0" fill="url(#tabr)" /><polyline points="260.2,271.0 265.6,263.0 336.5,287.7 335.4,295.2" fill="none" stroke="#b4cc28" stroke-width="1.2" /><polyline points="260.2,271.0 332.0,292.0" fill="none" stroke="#b4cc28" stroke-width="1.2" /><polyline points="277.4,303.8 287.0,293.0 330.0,307.0 325.7,311.3 277.4,303.8" fill="none" stroke="#b4cc28" stroke-width="1.2" /><polygon points="261.3,345.7 275.2,347.0 275.2,356.4 261.3,353.0" fill="#3aa818" /><polygon points="441.3,394.5 464.0,393.0 467.6,387.0 463.0,405.7 441.0,402.0" fill="#2f9a10" /><polyline points="441.3,394.5 460.0,398.0 467.6,387.0" fill="none" stroke="#5ad030" stroke-width="1" /><polygon points="238.9,168.7 230.3,185.6 213.7,196.9 192.9,199.9 172.7,194.1 157.7,180.6 151.3,162.7 155.1,144.4 168.0,129.8 187.3,122.5 208.4,123.9 226.5,133.9 237.5,150.0" fill="#30c418" /><polygon points="237.1,168.4 228.9,184.5 213.0,195.2 193.0,198.1 173.7,192.5 159.2,179.7 153.1,162.6 156.7,145.1 169.1,131.3 187.6,124.3 207.8,125.7 225.2,135.1 235.8,150.6" fill="#a6c008" /><polygon points="235.5,168.1 227.6,183.5 212.3,193.8 193.1,196.5 174.5,191.2 160.6,178.9 154.7,162.5 158.1,145.8 170.1,132.5 187.8,125.8 207.3,127.2 224.1,136.3 234.3,151.0" fill="none" stroke="#647a00" stroke-width="0.9"/><polygon points="233.1,167.6 225.7,181.9 211.3,191.5 193.3,194.0 175.8,189.0 162.8,177.6 157.2,162.4 160.4,146.8 171.6,134.5 188.3,128.3 206.6,129.6 222.3,138.0 231.9,151.8" fill="none" stroke="#647a00" stroke-width="0.9"/><polygon points="230.6,167.1 223.7,180.4 210.3,189.2 193.5,191.5 177.1,186.9 164.9,176.3 159.7,162.2 162.7,147.8 173.2,136.5 188.7,130.8 205.8,131.9 220.5,139.8 229.5,152.5" fill="none" stroke="#647a00" stroke-width="0.9"/><polygon points="228.9,166.8 222.3,179.3 209.6,187.6 193.6,189.7 178.0,185.4 166.5,175.4 161.5,162.1 164.3,148.6 174.3,137.9 189.0,132.5 205.3,133.7 219.2,141.1 227.8,153.0" fill="url(#waffle2)" /><polygon points="237.1,168.4 228.9,184.5 213.0,195.2 193.0,198.1 173.7,192.5 159.2,179.7 153.1,162.6 156.7,145.1 169.1,131.3 187.6,124.3 207.8,125.7 225.2,135.1 235.8,150.6" fill="url(#rimshade)" /><polygon points="350.0,180.3 341.3,197.1 324.7,208.3 303.7,211.3 283.4,205.5 268.3,192.1 261.8,174.2 265.6,156.0 278.6,141.6 298.0,134.3 319.2,135.7 337.5,145.7 348.6,161.7" fill="#30c418" /><polygon points="348.2,180.0 339.9,196.0 323.9,206.7 303.9,209.5 284.3,203.9 269.8,191.1 263.6,174.1 267.2,156.7 279.7,143.0 298.3,136.0 318.7,137.5 336.2,146.9 346.9,162.3" fill="#a6c008" /><polygon points="346.6,179.7 338.7,195.0 323.3,205.2 304.0,207.9 285.2,202.6 271.2,190.3 265.2,174.0 268.7,157.4 280.7,144.3 298.6,137.6 318.2,139.0 335.1,148.0 345.3,162.7" fill="none" stroke="#647a00" stroke-width="0.9"/><polygon points="344.2,179.2 336.7,193.5 322.3,202.9 304.1,205.4 286.5,200.4 273.3,189.0 267.7,173.9 270.9,158.4 282.2,146.2 299.0,140.1 317.4,141.4 333.3,149.8 342.9,163.5" fill="none" stroke="#647a00" stroke-width="0.9"/><polygon points="341.7,178.8 334.8,191.9 321.3,200.6 304.3,202.9 287.8,198.3 275.5,187.8 270.2,173.8 273.2,159.5 283.7,148.2 299.4,142.5 316.7,143.7 331.5,151.6 340.5,164.2" fill="none" stroke="#647a00" stroke-width="0.9"/><polygon points="339.9,178.4 333.3,190.8 320.5,199.0 304.4,201.1 288.7,196.8 277.0,186.8 272.0,173.7 274.8,160.2 284.8,149.6 299.7,144.3 316.1,145.5 330.2,152.8 338.8,164.7" fill="url(#waffle)" /><polygon points="348.2,180.0 339.9,196.0 323.9,206.7 303.9,209.5 284.3,203.9 269.8,191.1 263.6,174.1 267.2,156.7 279.7,143.0 298.3,136.0 318.7,137.5 336.2,146.9 346.9,162.3" fill="url(#rimshade)" /><polygon points="468.8,180.5 459.2,195.8 441.6,205.2 419.9,206.8 399.1,200.0 384.1,186.5 378.2,169.3 382.8,152.4 396.8,139.6 417.1,133.9 438.9,136.6 457.4,147.1 468.1,162.9" fill="#30c418" /><polygon points="467.1,180.1 457.9,194.6 440.9,203.6 420.1,205.0 400.1,198.5 385.7,185.6 380.0,169.3 384.4,153.2 397.8,141.1 417.3,135.7 438.3,138.3 456.0,148.3 466.4,163.4" fill="#a6c008" /><polygon points="465.5,179.7 456.7,193.5 440.3,202.1 420.3,203.4 401.1,197.2 387.1,184.9 381.6,169.3 385.8,153.9 398.8,142.4 417.5,137.3 437.7,139.8 454.8,149.4 464.8,163.7" fill="none" stroke="#647a00" stroke-width="0.9"/><polygon points="463.1,179.1 454.8,191.8 439.5,199.7 420.6,200.9 402.5,195.1 389.3,183.7 384.1,169.3 388.0,155.1 400.2,144.5 417.8,139.8 436.9,142.2 453.0,151.0 462.4,164.3" fill="none" stroke="#647a00" stroke-width="0.9"/><polygon points="460.7,178.5 452.9,190.2 438.6,197.4 420.9,198.4 403.9,193.1 391.5,182.5 386.6,169.2 390.2,156.2 401.6,146.5 418.1,142.3 436.0,144.5 451.1,152.7 460.0,164.9" fill="none" stroke="#647a00" stroke-width="0.9"/><polygon points="458.9,178.1 451.6,189.0 437.9,195.7 421.1,196.6 404.9,191.6 393.1,181.7 388.4,169.2 391.8,157.1 402.6,148.0 418.3,144.1 435.3,146.2 449.7,153.9 458.2,165.4" fill="url(#waffle2)" /><polygon points="467.1,180.1 457.9,194.6 440.9,203.6 420.1,205.0 400.1,198.5 385.7,185.6 380.0,169.3 384.4,153.2 397.8,141.1 417.3,135.7 438.3,138.3 456.0,148.3 466.4,163.4" fill="url(#rimshade)" /><polygon points="540.9,115.6 530.8,129.9 512.5,138.3 490.4,138.8 469.4,131.4 454.4,117.7 448.8,100.8 453.9,84.7 468.6,73.0 489.4,68.4 511.6,72.0 530.1,82.9 540.7,98.6" fill="#30c418" /><polygon points="539.2,115.1 529.5,128.7 511.9,136.6 490.6,137.0 470.4,129.9 456.0,116.9 450.6,100.9 455.5,85.6 469.6,74.5 489.6,70.2 510.9,73.6 528.7,84.0 539.0,99.0" fill="#a6c008" /><polygon points="537.7,114.7 528.3,127.6 511.4,135.1 490.9,135.5 471.4,128.6 457.4,116.2 452.2,100.9 456.9,86.4 470.4,75.9 489.7,71.8 510.3,75.1 527.5,85.0 537.4,99.3" fill="none" stroke="#647a00" stroke-width="0.9"/><polygon points="535.3,114.0 526.5,125.9 510.6,132.7 491.3,133.0 472.9,126.6 459.7,115.1 454.7,101.0 459.1,87.6 471.8,78.0 489.9,74.3 509.3,77.4 525.6,86.6 534.9,99.8" fill="none" stroke="#647a00" stroke-width="0.9"/><polygon points="532.9,113.3 524.7,124.1 509.8,130.3 491.6,130.5 474.4,124.6 461.9,114.0 457.2,101.1 461.2,88.8 473.1,80.1 490.1,76.8 508.4,79.7 523.7,88.2 532.5,100.3" fill="none" stroke="#647a00" stroke-width="0.9"/><polygon points="531.1,112.8 523.4,122.9 509.2,128.6 491.9,128.7 475.4,123.2 463.6,113.2 459.0,101.1 462.8,89.7 474.1,81.6 490.3,78.6 507.7,81.4 522.3,89.4 530.7,100.7" fill="url(#waffle)" /><polygon points="539.2,115.1 529.5,128.7 511.9,136.6 490.6,137.0 470.4,129.9 456.0,116.9 450.6,100.9 455.5,85.6 469.6,74.5 489.6,70.2 510.9,73.6 528.7,84.0 539.0,99.0" fill="url(#rimshade)" /><polygon points="418.1,261.2 408.2,275.4 388.9,284.3 364.6,285.9 340.8,279.9 323.0,267.6 315.3,251.8 319.4,236.2 334.5,224.3 357.0,218.9 381.7,221.2 403.1,230.6 416.3,245.1" fill="#30c418" /><polygon points="416.3,260.9 406.8,274.2 388.2,282.6 364.7,284.1 341.8,278.4 324.6,266.7 317.1,251.8 321.1,237.0 335.6,225.8 357.2,220.7 381.2,222.9 401.8,231.9 414.5,245.6" fill="#a6c008" /><polygon points="414.8,260.5 405.6,273.2 387.6,281.2 364.9,282.5 342.6,277.0 326.0,265.9 318.7,251.7 322.5,237.7 336.5,227.1 357.5,222.3 380.7,224.4 400.7,233.0 413.0,246.0" fill="none" stroke="#647a00" stroke-width="0.9"/><polygon points="412.3,260.0 403.7,271.6 386.6,278.9 365.1,280.0 344.0,274.9 328.1,264.7 321.2,251.6 324.8,238.8 338.0,229.1 357.9,224.7 379.9,226.8 398.9,234.7 410.6,246.7" fill="none" stroke="#647a00" stroke-width="0.9"/><polygon points="409.9,259.5 401.7,270.1 385.6,276.6 365.3,277.6 345.3,272.8 330.3,263.4 323.7,251.5 327.0,239.8 339.5,231.1 358.3,227.2 379.1,229.1 397.1,236.4 408.2,247.4" fill="none" stroke="#647a00" stroke-width="0.9"/><polygon points="408.1,259.2 400.4,268.9 384.9,274.9 365.4,275.8 346.3,271.3 331.9,262.5 325.5,251.4 328.6,240.6 340.6,232.5 358.6,229.0 378.5,230.8 395.8,237.7 406.5,247.9" fill="url(#waffle3)" /><polygon points="416.3,260.9 406.8,274.2 388.2,282.6 364.7,284.1 341.8,278.4 324.6,266.7 317.1,251.8 321.1,237.0 335.6,225.8 357.2,220.7 381.2,222.9 401.8,231.9 414.5,245.6" fill="url(#rimshade)" /><polygon points="458.6,347.2 448.0,361.0 428.4,369.1 404.2,369.5 381.0,362.3 364.1,348.9 357.4,332.6 362.4,317.0 377.9,305.7 400.4,301.3 424.8,304.8 445.5,315.4 457.7,330.7" fill="#30c418" /><polygon points="456.8,346.7 446.7,359.8 427.8,367.4 404.5,367.8 382.1,360.8 365.7,348.1 359.2,332.6 363.9,317.8 378.9,307.2 400.6,303.1 424.2,306.5 444.1,316.6 455.9,331.1" fill="#a6c008" /><polygon points="455.3,346.3 445.5,358.7 427.3,365.9 404.7,366.2 383.0,359.5 367.2,347.4 360.8,332.6 365.3,318.6 379.8,308.5 400.8,304.7 423.6,308.0 442.9,317.6 454.4,331.5" fill="none" stroke="#647a00" stroke-width="0.9"/><polygon points="452.9,345.7 443.7,357.0 426.4,363.5 405.0,363.7 384.5,357.5 369.4,346.3 363.3,332.7 367.5,319.8 381.2,310.6 401.1,307.1 422.7,310.3 441.0,319.3 451.9,332.0" fill="none" stroke="#647a00" stroke-width="0.9"/><polygon points="450.5,345.0 441.8,355.4 425.6,361.2 405.4,361.2 385.9,355.4 371.6,345.1 365.8,332.7 369.7,321.0 382.6,312.7 401.3,309.6 421.7,312.6 439.1,320.9 449.5,332.6" fill="none" stroke="#647a00" stroke-width="0.9"/><polygon points="448.7,344.6 440.5,354.1 424.9,359.5 405.6,359.4 387.0,354.0 373.2,344.3 367.6,332.7 371.3,321.8 383.6,314.1 401.5,311.4 421.1,314.3 437.7,322.1 447.7,333.0" fill="url(#waffle3)" /><polygon points="456.8,346.7 446.7,359.8 427.8,367.4 404.5,367.8 382.1,360.8 365.7,348.1 359.2,332.6 363.9,317.8 378.9,307.2 400.6,303.1 424.2,306.5 444.1,316.6 455.9,331.1" fill="url(#rimshade)" /><path d="M174.9 171.3L193.6 171.8M176.0 175.0L197.6 176.4M197.2 153.8L205.3 153.1M194.8 149.4L215.7 144.2M175.8 141.9L199.5 149.5M215.5 169.2L224.0 168.0M188.8 149.8L212.9 147.5M179.4 174.2L188.1 179.2" stroke="#a00808" stroke-width="1.1" opacity="1" fill="none"/><path d="M328.6 156.5L329.7 162.7M287.2 156.2L301.4 161.4M316.8 160.3L335.3 166.2M310.8 183.8L315.3 198.7M311.1 149.7L324.6 162.1M293.3 155.6L306.6 167.6" stroke="#a00808" stroke-width="1.1" opacity="1" fill="none"/><path d="M437.1 197.5L457.4 186.4M422.9 174.6L438.3 167.3M404.7 172.1L416.5 171.5M392.2 158.4L412.2 156.5M420.6 186.9L432.7 179.8M430.7 176.2L449.6 179.0M439.2 170.2L459.9 166.9M423.7 183.6L435.5 177.2" stroke="#a00808" stroke-width="1.1" opacity="1" fill="none"/><path d="M501.3 116.0L511.9 119.2M475.9 110.4L485.5 111.2M468.4 111.4L488.7 113.2M482.2 124.5L504.0 112.7M486.8 124.4L506.9 120.3M481.5 121.7L490.9 122.5" stroke="#a00808" stroke-width="1.1" opacity="1" fill="none"/><path d="M350.8 268.5L372.7 264.4M385.2 254.0L392.7 258.6M347.6 243.3L362.5 246.1M336.8 256.8L358.8 259.3M373.9 258.3L395.4 253.5M356.6 247.8L364.8 253.1M367.0 237.3L384.9 237.6M343.9 242.2L358.9 237.1" stroke="#a00808" stroke-width="1.1" opacity="1" fill="none"/><path d="M417.0 325.1L427.2 327.1M376.1 349.2L392.2 343.2M411.9 332.5L425.2 340.7M426.9 329.9L443.7 336.7M425.0 321.7L443.9 318.3M380.4 335.1L395.8 344.7" stroke="#a00808" stroke-width="1.1" opacity="1" fill="none"/><path d="M322.0 309.0L396.0 214.0M471.0 159.0L426.0 237.0M476.0 86.0L436.0 119.0M191.0 134.0L216.0 184.0" stroke="#a80a0a" stroke-width="1.2" fill="none"/><path d="M451.2 89.8L235.9 210.4M459.1 107.2L282.4 157.4M465.3 102.9L309.7 185.2M469.6 97.7L234.6 134.0M464.9 87.4L294.6 181.1M438.4 110.8L220.0 205.7M469.6 89.2L303.1 192.2M441.0 106.5L230.9 210.3M463.6 118.2L222.4 150.8M460.8 104.1L237.9 207.8M469.9 92.5L233.5 185.8M452.3 106.2L275.2 158.5M436.9 86.1L271.0 191.8M453.0 109.3L280.8 207.0" stroke="#a00808" stroke-width="0.9" opacity="0.9" fill="none"/><path d="M418.0 139.8L225.3 152.4M422.8 159.3L268.5 144.2M407.1 139.9L221.3 169.3M387.3 145.0L251.5 171.7M397.0 156.7L262.7 139.4M426.3 159.9L229.8 148.3M433.9 149.1L212.5 144.8M428.4 157.1L262.5 182.8" stroke="#a00808" stroke-width="0.9" opacity="0.9" fill="none"/></svg></div>

<div class="group" style="left:263px;top:603px;width:710px;height:88px;border-color:#c8c8c8"></div>
<div class="pbtn" style="left:281px;top:627px;width:112px;height:18px">
  <svg width="16" height="11" style="position:absolute;left:15px;top:4px"><path d="M0 0 L8 5.5 L0 11Z" fill="#111"/><rect x="9.5" y="0" width="2.2" height="11" fill="#111"/><rect x="13" y="0" width="2.2" height="11" fill="#111"/></svg>
  <span class="bt" style="left:35px;top:2px;font-size:12px">Play/Pause</span>
</div>
<div class="lbl" style="left:281px;top:657px">Speed:</div>
<div class="groove" style="left:322px;top:662px;width:76px"></div>
<div class="knob" style="left:359px;top:656px"></div>

<div class="lbl" style="left:428px;top:612px;font-size:10px">Preview By</div>
<div class="inner" style="left:419px;top:623px;width:77px;height:55px"></div>
<div class="radio" style="left:431px;top:636px"></div>
<div class="radio on" style="left:431px;top:654px"><div class="dot"></div></div>
<div class="lbl" style="left:449px;top:636px">Layer</div>
<div class="lbl" style="left:449px;top:654px">Line</div>

<div class="lbl" style="left:507px;top:625px">Start</div>
<div class="lbl" style="left:513px;top:658px">End</div>
<div class="groove" style="left:545px;top:629px;width:297px"></div>
<div class="knob" style="left:546px;top:624px"></div>
<div class="groove" style="left:545px;top:661px;width:297px"></div>
<div class="knob" style="left:685px;top:656px"></div>

<div class="cbox" style="left:865px;top:625px"></div>
<div class="lbl" style="left:882px;top:625px;font-size:12.5px">Link Sliders</div>
<div class="pbtn" style="left:857px;top:653px;width:46px;height:19px"><svg width="12" height="14" style="position:absolute;left:16px;top:2px"><path d="M11 0 L11 14 L0 7Z" fill="#111"/></svg></div>
<div class="pbtn" style="left:906px;top:653px;width:46px;height:19px"><svg width="12" height="14" style="position:absolute;left:17px;top:2px"><path d="M0 0 L0 14 L11 7Z" fill="#111"/></svg></div>

<div id="toolbar"><svg width="40" height="671" viewBox="0 0 40 671" style="position:absolute;left:-1px;top:0"><defs><linearGradient id="pressg" x1="0" y1="0" x2="0" y2="1"><stop offset="0" stop-color="#d8d8d8"/><stop offset="0.5" stop-color="#c2c2c2"/><stop offset="1" stop-color="#bdbdbd"/></linearGradient><linearGradient id="pressh" x1="0" y1="0" x2="1" y2="0"><stop offset="0" stop-color="#000" stop-opacity="0.22"/><stop offset="0.08" stop-color="#000" stop-opacity="0"/><stop offset="0.92" stop-color="#000" stop-opacity="0"/><stop offset="1" stop-color="#000" stop-opacity="0.22"/></linearGradient></defs><circle cx="8.5" cy="6.300000000000001" r="1" fill="#a8a8a8"/><circle cx="8.1" cy="5.600000000000001" r="0.8" fill="#fafafa"/><circle cx="11.0" cy="9.100000000000001" r="1" fill="#a8a8a8"/><circle cx="10.6" cy="8.399999999999999" r="0.8" fill="#fafafa"/><circle cx="13.7" cy="6.300000000000001" r="1" fill="#a8a8a8"/><circle cx="13.3" cy="5.600000000000001" r="0.8" fill="#fafafa"/><circle cx="16.2" cy="9.100000000000001" r="1" fill="#a8a8a8"/><circle cx="15.8" cy="8.399999999999999" r="0.8" fill="#fafafa"/><circle cx="18.9" cy="6.300000000000001" r="1" fill="#a8a8a8"/><circle cx="18.5" cy="5.600000000000001" r="0.8" fill="#fafafa"/><circle cx="21.4" cy="9.100000000000001" r="1" fill="#a8a8a8"/><circle cx="21.0" cy="8.399999999999999" r="0.8" fill="#fafafa"/><circle cx="24.1" cy="6.300000000000001" r="1" fill="#a8a8a8"/><circle cx="23.7" cy="5.600000000000001" r="0.8" fill="#fafafa"/><circle cx="26.6" cy="9.100000000000001" r="1" fill="#a8a8a8"/><circle cx="26.2" cy="8.399999999999999" r="0.8" fill="#fafafa"/><circle cx="29.3" cy="6.300000000000001" r="1" fill="#a8a8a8"/><circle cx="28.9" cy="5.600000000000001" r="0.8" fill="#fafafa"/><circle cx="31.8" cy="9.100000000000001" r="1" fill="#a8a8a8"/><circle cx="31.4" cy="8.399999999999999" r="0.8" fill="#fafafa"/><ellipse cx="20" cy="41.0" rx="11" ry="2.5" fill="#000" opacity="0.08"/><polygon points="6.7,18.5 18.4,15.5 33.5,17.4 22.9,22.4" fill="#7a9ab2"/><polygon points="6.7,18.5 22.9,22.4 23.5,42.0 8.4,35.3" fill="#7093ad"/><polygon points="22.9,22.4 33.5,17.4 31.8,34.1 23.5,42.0" fill="#6888a0"/><ellipse cx="20" cy="82.8" rx="11" ry="2.5" fill="#000" opacity="0.08"/><polygon points="6.7,60.3 18.4,57.3 33.5,59.2 22.9,64.2" fill="#6e92b2"/><polygon points="6.7,60.3 22.9,64.2 23.5,83.8 8.4,77.1" fill="#c0c0c0"/><polygon points="22.9,64.2 33.5,59.2 31.8,75.9 23.5,83.8" fill="#8e8e8e"/><ellipse cx="20" cy="124.30000000000001" rx="11" ry="2.5" fill="#000" opacity="0.08"/><polygon points="6.7,101.8 18.4,98.8 33.5,100.7 22.9,105.7" fill="#a8a8a8"/><polygon points="6.7,101.8 22.9,105.7 23.5,125.3 8.4,118.6" fill="#7093ad"/><polygon points="22.9,105.7 33.5,100.7 31.8,117.4 23.5,125.3" fill="#8e8e8e"/><ellipse cx="20" cy="166.3" rx="11" ry="2.5" fill="#000" opacity="0.08"/><polygon points="6.7,143.8 18.4,140.8 33.5,142.7 22.9,147.7" fill="#a8a8a8"/><polygon points="6.7,143.8 22.9,147.7 23.5,167.3 8.4,160.6" fill="#c0c0c0"/><polygon points="22.9,147.7 33.5,142.7 31.8,159.4 23.5,167.3" fill="#6888a0"/><line x1="6" y1="178.5" x2="40" y2="178.5" stroke="#8a8a8a" stroke-width="1" stroke-dasharray="1.2,1.8"/><rect x="1" y="186" width="38" height="37.5" fill="url(#pressg)"/><rect x="1" y="186" width="38" height="37.5" fill="url(#pressh)"/><ellipse cx="20" cy="216.5" rx="11" ry="2.5" fill="#000" opacity="0.08"/><polygon points="6.7,194.0 18.4,191.0 33.5,192.9 22.9,197.9" fill="#a0a0a0"/><polygon points="6.7,194.0 22.9,197.9 23.5,217.5 8.4,210.8" fill="#b4b4b4"/><polygon points="22.9,197.9 33.5,192.9 31.8,209.6 23.5,217.5" fill="#8a8a8a"/><rect x="1" y="224" width="38" height="41" fill="url(#pressg)"/><rect x="1" y="224" width="38" height="41" fill="url(#pressh)"/><path d="M6.3,236.2L18.9,232.5M18.9,232.5L33.3,235.0M33.3,235.0L23.3,240.0M23.3,240.0L6.3,236.2M8.2,252.6L22.6,258.9M22.6,258.9L32.7,252.0M32.7,252.0L18.9,247.6M18.9,247.6L8.2,252.6M6.3,236.2L8.2,252.6M18.9,232.5L18.9,247.6M33.3,235.0L32.7,252.0M23.3,240.0L22.6,258.9" stroke="#2a2a2a" stroke-width="1.1" fill="none"/><circle cx="7.8" cy="279.6" r="1.6" fill="#4a5f8c"/><circle cx="18.8" cy="275.5" r="1.6" fill="#4a5f8c"/><circle cx="32.2" cy="278.8" r="1.6" fill="#4a5f8c"/><circle cx="22.9" cy="283.3" r="1.6" fill="#4a5f8c"/><circle cx="19.0" cy="289.4" r="1.6" fill="#4a5f8c"/><circle cx="9.0" cy="294.1" r="1.6" fill="#4a5f8c"/><circle cx="31.3" cy="292.7" r="1.6" fill="#4a5f8c"/><circle cx="22.1" cy="299.0" r="1.6" fill="#4a5f8c"/><polygon points="8.4,333.2 31.3,336.0 15.6,340.5" fill="#8c8c8c"/><line x1="8.9" y1="333.0" x2="10.6" y2="320.4" stroke="#e43434" stroke-width="1.6"/><polygon points="10.6,315.4 7.8,321.9 13.4,321.9" fill="#e43434"/><line x1="15.6" y1="340.5" x2="16.5" y2="326.5" stroke="#e43434" stroke-width="1.6"/><polygon points="16.5,321.5 13.7,328.0 19.3,328.0" fill="#e43434"/><line x1="31.3" y1="336.0" x2="29.6" y2="321.5" stroke="#e43434" stroke-width="1.6"/><polygon points="29.6,316.5 26.8,323.0 32.4,323.0" fill="#e43434"/><rect x="1" y="352" width="38" height="38" fill="url(#pressg)"/><rect x="1" y="352" width="38" height="38" fill="url(#pressh)"/><g fill="#6a6a6a"><ellipse cx="23.5" cy="365.5" rx="8.2" ry="8"/><polygon points="16.5,369.0 24.0,372.0 18.5,378.0 13.5,375.0"/><path d="M12.0,376.0L19.0,379.5M11.0,378.6L18.0,382.0M10.0,381.2L17.0,384.6" stroke="#6a6a6a" stroke-width="1.6"/></g><ellipse cx="23" cy="361" rx="2.6" ry="1.3" fill="#b0b0b0" transform="rotate(-25 23 361)"/><line x1="6" y1="395.5" x2="40" y2="395.5" stroke="#8a8a8a" stroke-width="1" stroke-dasharray="1.2,1.8"/><polygon points="7.0,411.0 18.0,408.5 18.0,430.0 9.0,428.0" fill="#bdbdbd"/><polygon points="13.5,416.5 25.0,411.0 25.0,430.5 14.0,435.0" fill="#b02828" opacity="0.9"/><path d="M19.0,408.5L34.0,410.6M34.0,410.6L22.0,414.6M22.0,414.6L7.0,411.0M23.0,433.6L33.5,428.0M34.0,410.6L33.5,428.0M22.0,414.6L23.0,433.6M9.0,428.0L23.0,433.6" stroke="#2a2a2a" stroke-width="1" fill="none"/><line x1="6" y1="446.5" x2="40" y2="446.5" stroke="#8a8a8a" stroke-width="1" stroke-dasharray="1.2,1.8"/><polygon points="6.7,461.0 19.0,459.5 33.5,462.5 33.5,466.5 6.7,466.0" fill="#c4c4c4"/><polygon points="6.7,465.0 33.5,466.4 33.5,468.0 6.7,467.0" fill="#9c9c9c"/><polygon points="7.3,466.0 17.9,467.0 17.9,479.3 7.3,477.0" fill="#b4b4b4"/><polygon points="20.0,467.5 24.0,468.0 24.0,482.0 20.0,481.0" fill="#6d9abf"/><polygon points="26.0,468.0 30.7,468.5 30.7,484.3 26.0,483.0" fill="#6d9abf"/></svg></div>
<svg id="grip" width="14" height="14" style="position:absolute;left:1010px;top:701px"><path d="M3.5 13.5 L13.5 3.5 M7.5 13.5 L13.5 7.5 M11.5 13.5 L13.5 11.5" stroke="#8a8a8a" stroke-width="1.1"/></svg>
</body></html>
